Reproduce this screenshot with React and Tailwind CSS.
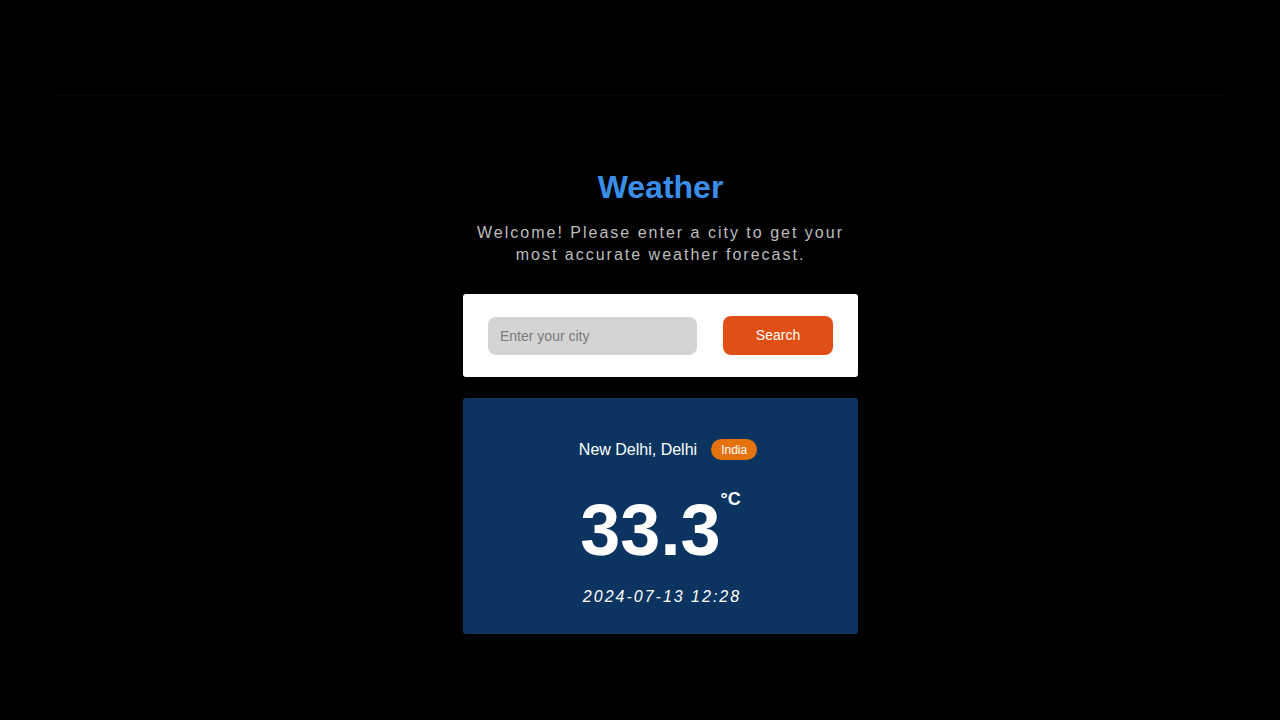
import React, { useState } from 'react'

// 날씨 카드
function WeatherCard({ data }) {
  return (
    <div className="w-[395px] bg-[#0b3560] rounded-[3px] pt-[41px] pb-[25px] flex flex-col items-center text-white">
      <div className="flex items-center gap-[14px] pl-[15px] h-[21px]">
        <span className="text-[16px] leading-none">{data.city}, {data.region}</span>
        <span className="bg-[#e3720f] rounded-full h-[21px] px-[10px] flex items-center text-[12px] leading-none">
          {data.country}
        </span>
      </div>

      <div className="flex items-start mt-[34px]">
        <span className="text-[72px] font-bold leading-none">{data.temp}</span>
        <span className="text-[18px] font-bold leading-none -mt-1">°C</span>
      </div>

      <div className="mt-[19px] pl-[3px] text-[16px] leading-[24px] italic tracking-[2px]">{data.time}</div>
    </div>
  )
}

export default function App() {
  const [city, setCity] = useState('')

  const weather = {
    city: 'New Delhi',
    region: 'Delhi',
    country: 'India',
    temp: '33.3',
    time: '2024-07-13 12:28'
  }

  return (
    <div
      className="min-h-screen bg-black"
      style={{ fontFamily: '"Liberation Sans", Arial, sans-serif' }}
    >
      {/* 상단 라인 */}
      <div className="h-[96px] mx-[56px] border-b border-[#070707]"></div>

      <div className="flex flex-col items-center pl-[41px] pt-[71px]">
        <h1 className="text-[32px] leading-[40px] font-bold text-[#3a8de8]">Weather</h1>
        <p className="mt-[15px] text-[16px] leading-[22px] tracking-[2px] text-[#bdbdbd] text-center w-[400px]">
          Welcome! Please enter a city to get your most accurate weather forecast.
        </p>

        {/* 검색 */}
        <div className="mt-[28px] w-[395px] h-[83px] bg-white rounded-[3px] px-[25px] flex items-center justify-between">
          <input
            value={city}
            onChange={e => setCity(e.target.value)}
            placeholder="Enter your city"
            className="w-[209px] h-[38px] bg-[#d4d4d4] rounded-[8px] px-[12px] text-[14px] text-[#333] placeholder:text-[#7a7a7a] outline-none"
          />
          <button className="w-[110px] h-[39px] bg-[#e04f13] rounded-[8px] text-white text-[14px]">
            Search
          </button>
        </div>

        <div className="mt-[21px]">
          <WeatherCard data={weather} />
        </div>
      </div>
    </div>
  )
}
